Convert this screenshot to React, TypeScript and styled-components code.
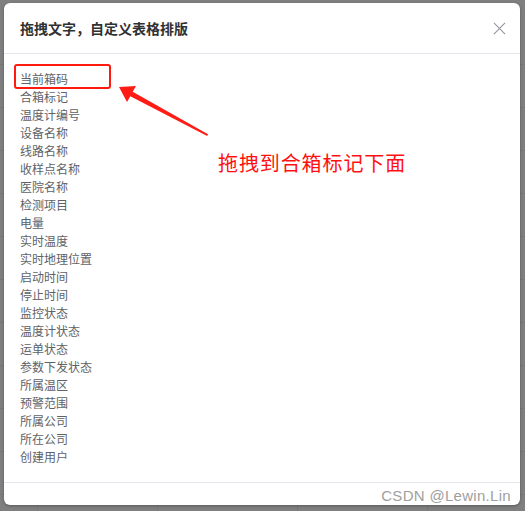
import React from "react";
import styled, { createGlobalStyle } from "styled-components";

const GlobalStyle = createGlobalStyle`
  html, body {
    margin: 0;
    padding: 0;
    background: #ffffff;
    font-family: "Noto Sans CJK SC", "Noto Sans", sans-serif;
  }
`;

const fields = [
  "当前箱码",
  "合箱标记",
  "温度计编号",
  "设备名称",
  "线路名称",
  "收样点名称",
  "医院名称",
  "检测项目",
  "电量",
  "实时温度",
  "实时地理位置",
  "启动时间",
  "停止时间",
  "监控状态",
  "温度计状态",
  "运单状态",
  "参数下发状态",
  "所属温区",
  "预警范围",
  "所属公司",
  "所在公司",
  "创建用户",
];

const backRows = Array.from({ length: 12 }, (_, i) => i);

export default function App() {
  return (
    <>
      <GlobalStyle />
      <Page>
        <BackTable>
          {backRows.map((i) => (
            <BackRow key={i}>
              <BackCell />
              <BackCell />
              <BackCell />
              <BackCell />
            </BackRow>
          ))}
        </BackTable>
        <Overlay />
        <Dialog>
          <Header>
            <Title>拖拽文字，自定义表格排版</Title>
            <CloseIcon viewBox="0 0 14 14">
              <path d="M1 1 L13 13 M13 1 L1 13" stroke="#909399" strokeWidth="1.1" fill="none" />
            </CloseIcon>
          </Header>
          <Body>
            <FieldList>
              {fields.map((f) => (
                <Field key={f}>{f}</Field>
              ))}
            </FieldList>
            <Highlight />
            <Arrow viewBox="0 0 100 60">
              <path
                d="M5 7 L22 6 L18.7 11.8 L94 54.3 L93.2 56 L16.3 16.2 L13 22 Z"
                fill="#ff1c14"
              />
            </Arrow>
            <Hint>拖拽到合箱标记下面</Hint>
          </Body>
          <Footer>
            <Watermark>CSDN @Lewin.Lin</Watermark>
          </Footer>
        </Dialog>
      </Page>
    </>
  );
}

const Page = styled.div`
  position: relative;
  width: 525px;
  height: 511px;
  overflow: hidden;
  padding: 3px 5px 6px 4px;
  box-sizing: border-box;
`;

const BackTable = styled.div`
  position: absolute;
  inset: 0;
  display: flex;
  flex-direction: column;
  padding-top: 22px;
`;

const BackRow = styled.div`
  display: grid;
  grid-template-columns: 38px 120px 140px 130px 1fr;
  height: 42px;
  flex: none;
  border-bottom: 1px solid #ebeef5;
`;

const BackCell = styled.div`
  border-right: 1px solid #ebeef5;
`;

const Overlay = styled.div`
  position: absolute;
  inset: 0;
  background: rgba(0, 0, 0, 0.5);
`;

const Dialog = styled.div`
  position: relative;
  z-index: 1;
  height: 100%;
  background: #ffffff;
  border-radius: 6px;
  display: flex;
  flex-direction: column;
  box-shadow: 0 1px 3px rgba(0, 0, 0, 0.3);
`;

const Header = styled.div`
  height: 50px;
  flex: none;
  display: flex;
  align-items: center;
  justify-content: space-between;
  padding: 0 14px 0 16px;
  border-bottom: 1px solid #e4e7ed;
`;

const Title = styled.div`
  font-size: 14px;
  font-weight: 600;
  color: #303133;
`;

const CloseIcon = styled.svg`
  width: 13px;
  height: 13px;
`;

const Body = styled.div`
  position: relative;
  flex: 1;
  padding: 16px 16px 0 16px;
`;

const FieldList = styled.div`
  display: flex;
  flex-direction: column;
`;

const Field = styled.div`
  font-size: 12px;
  line-height: 18px;
  height: 18px;
  color: #606266;
  cursor: move;
`;

const Highlight = styled.div`
  position: absolute;
  left: 10px;
  top: 10px;
  width: 97px;
  height: 25px;
  box-sizing: border-box;
  border: 2.5px solid #ff1a10;
  border-radius: 3px;
`;

const Arrow = styled.svg`
  position: absolute;
  left: 110px;
  top: 26px;
  width: 100px;
  height: 60px;
`;

const Hint = styled.div`
  position: absolute;
  left: 214px;
  top: 97px;
  font-size: 20px;
  line-height: 24px;
  letter-spacing: 0.9px;
  color: #ff1010;
`;

const Footer = styled.div`
  height: 22px;
  flex: none;
  border-top: 1px solid #e4e7ed;
  display: flex;
  align-items: center;
  justify-content: flex-end;
  padding: 0 9px 0 0;
`;

const Watermark = styled.div`
  font-family: "Liberation Sans", Arial, sans-serif;
  font-size: 15px;
  letter-spacing: 0.3px;
  color: #a0a0a0;
  margin-top: 2px;
`;
